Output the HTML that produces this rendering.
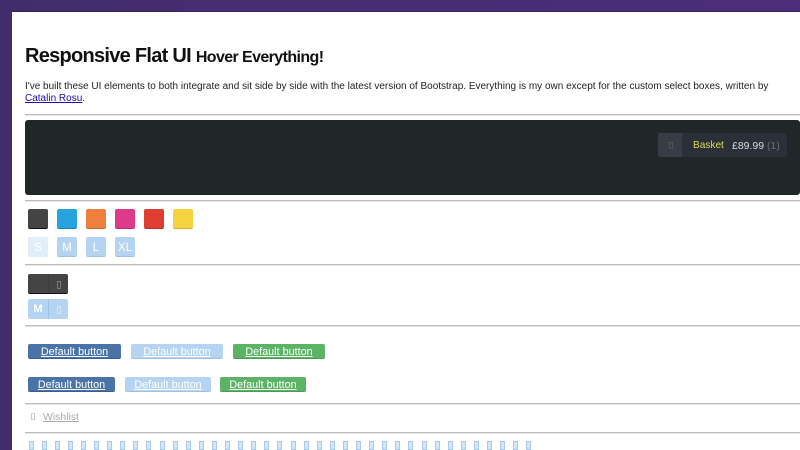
<!DOCTYPE html>
<html><head><meta charset="utf-8"><style>
html,body{margin:0;padding:0}
body{width:800px;height:450px;overflow:hidden;position:relative;background:linear-gradient(90deg,#412d6c,#4c2d7b);font-family:"Liberation Sans",sans-serif}
#w{position:absolute;left:12px;top:12px;width:788px;height:438px;background:#fff}
#w:before{content:"";position:absolute;left:0;top:-1px;width:788px;height:1px;background:#352458}
.a{position:absolute}
.hr{position:absolute;left:25px;width:775px;height:1px;background:#bdbdbd;box-shadow:0 1px 0 #e6e6e6}
.s{position:absolute;width:20px;height:20px;border-radius:2px;box-sizing:border-box}
.t{color:#fff;font:11.5px/22px "Liberation Sans",sans-serif;text-align:center}
.b{position:absolute;height:15px;border-radius:2px;color:#fff;text-align:center;font:10.8px/16px "Liberation Sans",sans-serif;text-decoration:underline;white-space:nowrap;box-sizing:border-box}
.tf{position:absolute;width:3px;height:7px;border:1px solid #a9c9e8;box-sizing:content-box;background:#d5e6f6}
</style></head><body>
<div id="w"></div>
<div class="a" style="left:25px;top:44px;font:bold 20px/24px 'Liberation Sans',sans-serif;letter-spacing:-.72px;color:#111;white-space:nowrap">Responsive Flat UI <span style="font-size:16px;letter-spacing:-.6px">Hover Everything!</span></div>
<div class="a" style="left:25px;top:81px;width:760px;font:10px/12px 'Liberation Sans',sans-serif;color:#222">I've built these UI elements to both integrate and sit side by side with the latest version of Bootstrap. Everything is my own except for the custom select boxes, written by <a style="color:#1a0dab;text-decoration:underline">Catalin Rosu</a>.</div>
<div class="hr" style="top:114px"></div>
<div class="a" style="left:25px;top:120px;width:775px;height:75px;background:#212629;border-radius:3px"></div>
<div class="a" style="left:658px;top:133px;width:129px;height:24px;background:#2b2f38;border-radius:2px"></div>
<div class="a" style="left:658px;top:133px;width:24px;height:24px;background:#383c47;border-radius:2px 0 0 2px"></div>
<div class="a" style="left:669px;top:142px;width:2px;height:5px;border:1px solid #4f535e"></div>
<div class="a" style="left:693px;top:139px;font:10.1px/14px 'Liberation Sans',sans-serif;color:#dcdc55;white-space:nowrap">Basket</div>
<div class="a" style="left:732px;top:139px;font:10.5px/14px 'Liberation Sans',sans-serif;color:#d9dbe0;white-space:nowrap">£89.99 <span style="color:#6b6f7a">(1)</span></div>
<div class="hr" style="top:200px"></div>
<div class="s" style="left:28px;top:209px;background:#444;border-bottom:1px solid #111"></div>
<div class="s" style="left:57px;top:209px;background:#29a3dd;border-bottom:1px solid #1d83b5"></div>
<div class="s" style="left:86px;top:209px;background:#ee7f3f;border-bottom:1px solid #cf6a2e"></div>
<div class="s" style="left:115px;top:209px;background:#dd3a8a;border-bottom:1px solid #b92d72"></div>
<div class="s" style="left:144px;top:209px;background:#de3e30;border-bottom:1px solid #b83025"></div>
<div class="s" style="left:173px;top:209px;background:#f4d33f;border-bottom:1px solid #d6b62f"></div>
<div class="s t" style="left:28px;top:237px;background:#e0eefa">S</div>
<div class="s t" style="left:57px;top:237px;background:#b4d4f1;border-bottom:1px solid #a1c3e2">M</div>
<div class="s t" style="left:86px;top:237px;background:#b4d4f1;border-bottom:1px solid #a1c3e2">L</div>
<div class="s t" style="left:115px;top:237px;background:#b4d4f1;border-bottom:1px solid #a1c3e2">XL</div>
<div class="hr" style="top:264px"></div>
<div class="a" style="left:28px;top:274px;width:40px;height:20px;background:#444;border-radius:2px;border-bottom:1px solid #111;box-sizing:border-box"></div>
<div class="a" style="left:48px;top:274px;width:1px;height:19px;background:#3c3c3c"></div>
<div class="a" style="left:57px;top:281px;width:2px;height:6px;border:1px solid #777"></div>
<div class="a" style="left:28px;top:299px;width:40px;height:20px;background:#b4d4f1;border-radius:2px"></div>
<div class="a" style="left:48px;top:299px;width:1px;height:20px;background:#9cc2e5"></div>
<div class="a" style="left:28px;top:299px;width:20px;font:bold 11px/20px 'Liberation Sans',sans-serif;color:#fff;text-align:center">M</div>
<div class="a" style="left:57px;top:306px;width:2px;height:6px;border:1px solid #d4e6f7"></div>
<div class="hr" style="top:325px"></div>
<div class="b" style="left:28px;top:344px;width:93px;background:#4a74a8;border-bottom:1px solid #3a5f8c">Default button</div>
<div class="b" style="left:131px;top:344px;width:92px;background:#b4d4f1;border-bottom:1px solid #a1c3e2">Default button</div>
<div class="b" style="left:233px;top:344px;width:92px;background:#5cb366;border-bottom:1px solid #4b9a55">Default button</div>
<div class="b" style="left:28px;top:377px;width:87px;background:#4a74a8;border-bottom:1px solid #3a5f8c">Default button</div>
<div class="b" style="left:125px;top:377px;width:86px;background:#b4d4f1;border-bottom:1px solid #a1c3e2">Default button</div>
<div class="b" style="left:220px;top:377px;width:86px;background:#5cb366;border-bottom:1px solid #4b9a55">Default button</div>
<div class="hr" style="top:403px"></div>
<div class="a" style="left:31px;top:413px;width:2px;height:5px;border:1px solid #ccc"></div>
<div class="a" style="left:43px;top:411px;font:10.45px/14px 'Liberation Sans',sans-serif;color:#a9a9a9;text-decoration:underline">Wishlist</div>
<div class="hr" style="top:432px"></div>
<div id="r"><div class="tf" style="left:28.5px;top:441px"></div><div class="tf" style="left:41.6px;top:441px"></div><div class="tf" style="left:54.7px;top:441px"></div><div class="tf" style="left:67.8px;top:441px"></div><div class="tf" style="left:80.9px;top:441px"></div><div class="tf" style="left:94px;top:441px"></div><div class="tf" style="left:107.1px;top:441px"></div><div class="tf" style="left:120.2px;top:441px"></div><div class="tf" style="left:133.3px;top:441px"></div><div class="tf" style="left:146.4px;top:441px"></div><div class="tf" style="left:159.5px;top:441px"></div><div class="tf" style="left:172.6px;top:441px"></div><div class="tf" style="left:185.7px;top:441px"></div><div class="tf" style="left:198.8px;top:441px"></div><div class="tf" style="left:211.9px;top:441px"></div><div class="tf" style="left:225px;top:441px"></div><div class="tf" style="left:238.1px;top:441px"></div><div class="tf" style="left:251.2px;top:441px"></div><div class="tf" style="left:264.3px;top:441px"></div><div class="tf" style="left:277.4px;top:441px"></div><div class="tf" style="left:290.5px;top:441px"></div><div class="tf" style="left:303.6px;top:441px"></div><div class="tf" style="left:316.7px;top:441px"></div><div class="tf" style="left:329.8px;top:441px"></div><div class="tf" style="left:342.9px;top:441px"></div><div class="tf" style="left:356px;top:441px"></div><div class="tf" style="left:369.1px;top:441px"></div><div class="tf" style="left:382.2px;top:441px"></div><div class="tf" style="left:395.3px;top:441px"></div><div class="tf" style="left:408.4px;top:441px"></div><div class="tf" style="left:421.5px;top:441px"></div><div class="tf" style="left:434.6px;top:441px"></div><div class="tf" style="left:447.7px;top:441px"></div><div class="tf" style="left:460.8px;top:441px"></div><div class="tf" style="left:473.9px;top:441px"></div><div class="tf" style="left:487px;top:441px"></div><div class="tf" style="left:500.1px;top:441px"></div><div class="tf" style="left:513.2px;top:441px"></div><div class="tf" style="left:526.3px;top:441px"></div></div>
</body></html>
